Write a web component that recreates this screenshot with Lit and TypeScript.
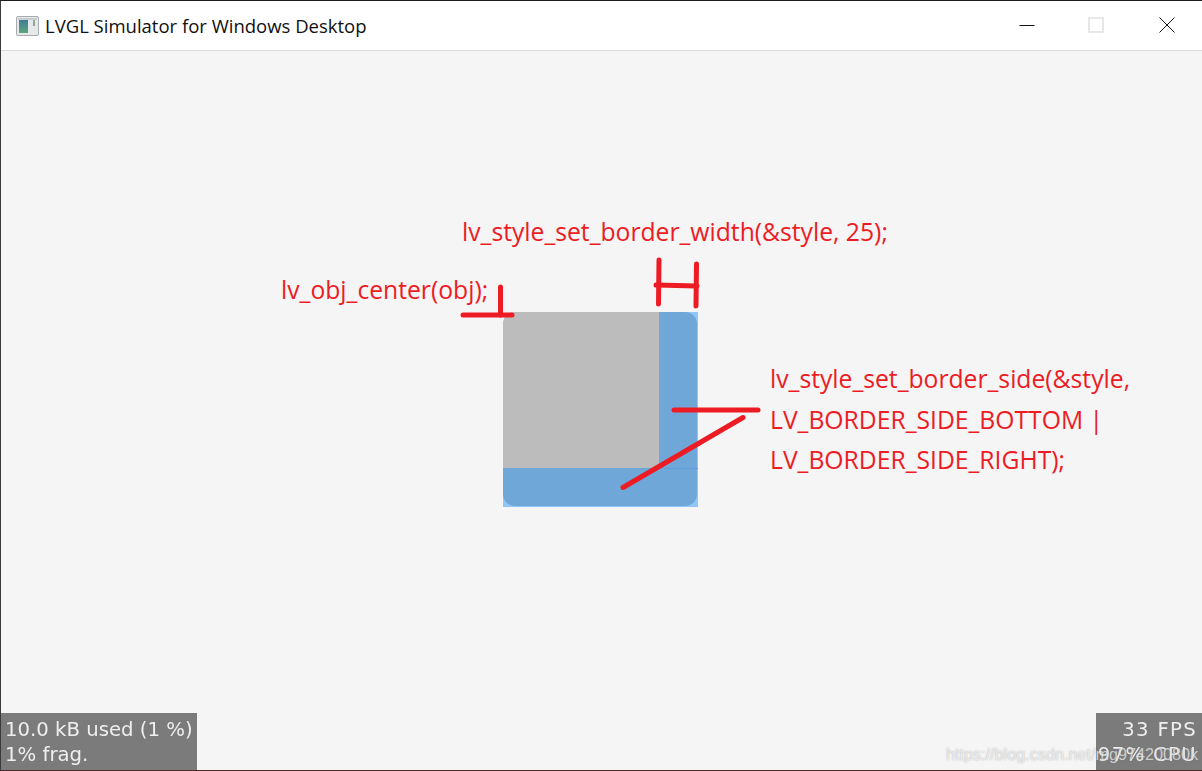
import { LitElement, html, css, svg } from "lit";
import { customElement } from "lit/decorators.js";

const strokes = [
  [500.5, 287, 500.5, 315],
  [463, 315, 512, 315],
  [659, 260, 658.5, 304],
  [696.5, 264, 696, 306],
  [656, 285, 697, 286],
  [674, 410, 758, 410],
  [743, 417.5, 623, 487.5],
];

@customElement("app-root")
export class AppRoot extends LitElement {
  static styles = css`
    :host {
      display: flex;
      flex-direction: column;
      position: relative;
      width: 1202px;
      height: 771px;
      box-sizing: border-box;
      overflow: hidden;
      background: #f5f5f5;
      border-top: 1px solid #1d1d1d;
      border-left: 1px solid #3a3a3a;
      border-bottom: 1px solid #4a2a22;
      font-family: "Open Sans", "Noto Sans", sans-serif;
    }
    .titlebar {
      flex: none;
      height: 49px;
      display: flex;
      align-items: center;
      background: #fff;
      border-bottom: 1px solid #dadada;
    }
    .app-icon {
      margin-left: 15px;
      flex: none;
    }
    .title {
      margin-left: 6px;
      flex: 1;
      font-size: 18.5px;
      color: #101010;
      white-space: nowrap;
    }
    .controls {
      display: flex;
      align-self: flex-start;
    }
    .control {
      width: 70px;
      height: 47px;
      display: flex;
      align-items: center;
      justify-content: center;
    }
    .control.max svg {
      margin-right: 3px;
    }
    .stage {
      flex: 1;
      display: flex;
      align-items: center;
      justify-content: center;
      padding: 0 2px 2px 0;
    }
    .frame {
      box-sizing: border-box;
      width: 195px;
      height: 195px;
      padding: 0 1px 1px 0;
      background: #90c6f8;
      border-radius: 12px 0 0 0;
      position: relative;
    }
    .obj {
      box-sizing: border-box;
      width: 194px;
      height: 194px;
      background: #bcbcbc;
      border-radius: 12px;
      border-right: 38px solid #6fa8d8;
      border-bottom: 38px solid #6fa8d8;
    }
    .seam {
      position: absolute;
      left: 156px;
      right: 0;
      top: 156px;
      height: 1px;
      background: #5fa0dc;
    }
    .note {
      position: absolute;
      margin: 0;
      color: #ed1c24;
      font-size: 24.7px;
      line-height: 40.5px;
      white-space: nowrap;
    }
    .note.width { left: 461px; top: 211px; }
    .note.center { left: 280px; top: 269px; }
    .note.side { left: 769px; top: 358px; }
    .ink {
      position: absolute;
      left: -1px;
      top: -1px;
      pointer-events: none;
    }
    .edge {
      position: absolute;
      left: -1px;
      top: 567px;
      bottom: 0;
      width: 1px;
      background: #8c8c74;
    }
    .monitor {
      position: absolute;
      bottom: 0;
      height: 57px;
      box-sizing: border-box;
      background: #7b7b7b;
      color: #eeeeee;
      font-family: "DejaVu Sans", sans-serif;
      font-size: 19.7px;
      line-height: 25px;
      padding-top: 4px;
      white-space: nowrap;
    }
    .monitor span {
      display: block;
      filter: blur(0.5px);
    }
    .monitor.mem {
      left: 0;
      width: 196px;
      padding-left: 4px;
    }
    .monitor.perf {
      right: 0;
      width: 106px;
      text-align: right;
      padding-right: 5px;
      letter-spacing: 1.3px;
    }
    .watermark {
      position: absolute;
      right: 4px;
      bottom: 6px;
      color: rgba(255, 255, 255, 0.65);
      text-shadow: 0 0 1.5px rgba(110, 110, 110, 0.55);
      font-family: "Liberation Sans", sans-serif;
      font-size: 16.2px;
      line-height: 20px;
      white-space: nowrap;
    }
  `;

  render() {
    return html`
      <header class="titlebar">
        <svg class="app-icon" width="23" height="20" viewBox="0 0 23 20">
          <defs>
            <linearGradient id="g" x1="0" y1="0" x2="0" y2="1">
              <stop offset="0" stop-color="#3f7f98" />
              <stop offset="1" stop-color="#5fa27c" />
            </linearGradient>
          </defs>
          <rect x="0.5" y="0.5" width="22" height="19" rx="1.5" fill="#e6e8ea" stroke="#a6abb0" />
          <rect x="2" y="2" width="19" height="2" fill="#c9ccd0" />
          <rect x="3" y="4" width="9" height="13" fill="url(#g)" />
          <rect x="17" y="4" width="2" height="6" fill="#8fa89a" />
        </svg>
        <span class="title">LVGL Simulator for Windows Desktop</span>
        <div class="controls">
          <div class="control">
            <svg width="16" height="16" viewBox="0 0 16 16"><path d="M0.5 8.5H15.5" stroke="#111" fill="none" /></svg>
          </div>
          <div class="control max">
            <svg width="16" height="16" viewBox="0 0 16 16"><rect x="1" y="1" width="14" height="14" fill="none" stroke="#cfcfcf" /></svg>
          </div>
          <div class="control">
            <svg width="16" height="16" viewBox="0 0 16 16"><path d="M0.5 0.5L15.5 15.5M15.5 0.5L0.5 15.5" stroke="#111" fill="none" /></svg>
          </div>
        </div>
      </header>
      <main class="stage">
        <div class="frame">
          <div class="obj"></div>
          <div class="seam"></div>
        </div>
      </main>
      <p class="note width">lv_style_set_border_width(&amp;style, 25);</p>
      <p class="note center">lv_obj_center(obj);</p>
      <p class="note side">lv_style_set_border_side(&amp;style,<br />LV_BORDER_SIDE_BOTTOM |<br />LV_BORDER_SIDE_RIGHT);</p>
      <svg class="ink" width="1202" height="771" viewBox="0 0 1202 771">
        ${strokes.map(
          ([x1, y1, x2, y2]) =>
            svg`<line x1=${x1} y1=${y1} x2=${x2} y2=${y2} stroke="#ed1c24" stroke-width="5" stroke-linecap="round" />`
        )}
      </svg>
      <div class="edge"></div>
      <div class="monitor mem"><span>10.0 kB used (1 %)</span><span>1% frag.</span></div>
      <div class="monitor perf"><span>33 FPS</span><span>97% CPU</span></div>
      <div class="watermark">https://blog.csdn.net/mg97420080k</div>
    `;
  }
}
